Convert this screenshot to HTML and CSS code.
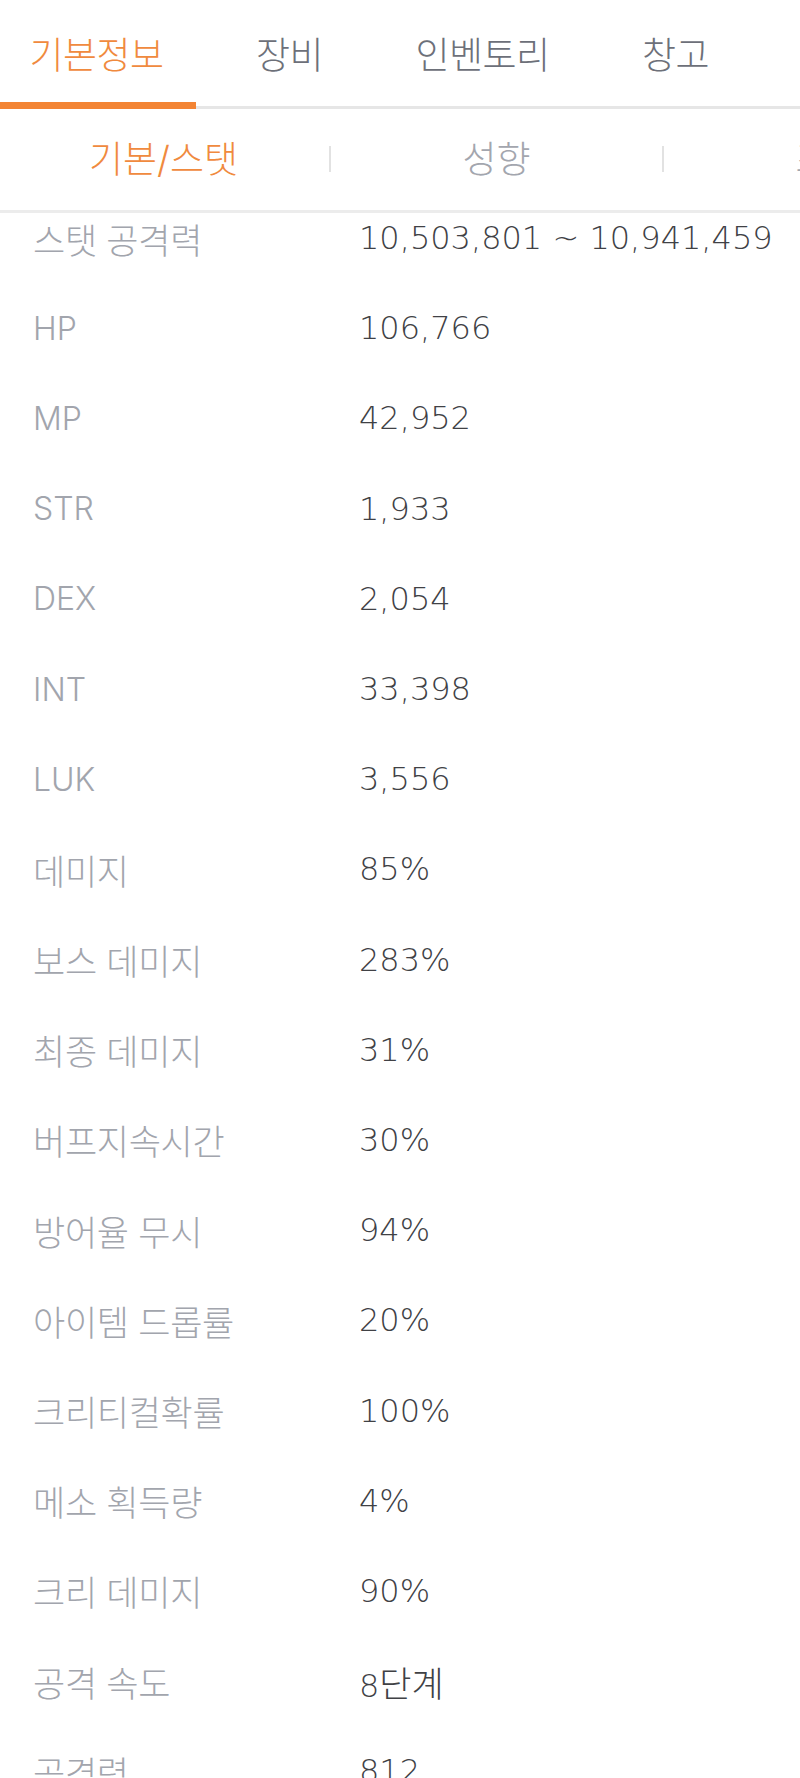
FILE: index.html
```html
<!DOCTYPE html>
<html lang="ko">
<head>
<meta charset="utf-8">
<title>기본정보</title>
<link rel="stylesheet" href="styles.css">
</head>
<body>
<div class="page">
  <nav class="tabs">
    <div class="tab active">기본정보</div>
    <div class="tab">장비</div>
    <div class="tab">인벤토리</div>
    <div class="tab">창고</div>
  </nav>
  <nav class="subtabs">
    <div class="subtab active">기본/스탯</div>
    <div class="subtab sep">성향</div>
    <div class="subtab sep">조합</div>
  </nav>
  <div class="list">
    <div class="list-inner">
      <div class="row"><span class="label">스탯 공격력</span><span class="value">10,503,801 ~ 10,941,459</span></div>
      <div class="row"><span class="label en">HP</span><span class="value">106,766</span></div>
      <div class="row"><span class="label en">MP</span><span class="value">42,952</span></div>
      <div class="row"><span class="label en">STR</span><span class="value">1,933</span></div>
      <div class="row"><span class="label en">DEX</span><span class="value">2,054</span></div>
      <div class="row"><span class="label en">INT</span><span class="value">33,398</span></div>
      <div class="row"><span class="label en">LUK</span><span class="value">3,556</span></div>
      <div class="row"><span class="label">데미지</span><span class="value">85%</span></div>
      <div class="row"><span class="label">보스 데미지</span><span class="value">283%</span></div>
      <div class="row"><span class="label">최종 데미지</span><span class="value">31%</span></div>
      <div class="row"><span class="label">버프지속시간</span><span class="value">30%</span></div>
      <div class="row"><span class="label">방어율 무시</span><span class="value">94%</span></div>
      <div class="row"><span class="label">아이템 드롭률</span><span class="value">20%</span></div>
      <div class="row"><span class="label">크리티컬확률</span><span class="value">100%</span></div>
      <div class="row"><span class="label">메소 획득량</span><span class="value">4%</span></div>
      <div class="row"><span class="label">크리 데미지</span><span class="value">90%</span></div>
      <div class="row"><span class="label">공격 속도</span><span class="value">8<span class="unit">단계</span></span></div>
      <div class="row"><span class="label">공격력</span><span class="value">812</span></div>
    </div>
  </div>
</div>
</body>
</html>
```

FILE: styles.css
```css
* { box-sizing: border-box; }
html, body {
  margin: 0;
  padding: 0;
  background: #ffffff;
}
body {
  width: 800px;
  height: 1778px;
  overflow: hidden;
  font-family: Inter, "Noto Sans CJK KR", sans-serif;
  font-weight: 300;
}
.page {
  width: 800px;
  height: 1778px;
  display: flex;
  flex-direction: column;
  overflow: hidden;
}
.tabs {
  display: grid;
  grid-template-columns: repeat(4, 193px);
  height: 109px;
  border-bottom: 3px solid #e6e6e6;
  flex: none;
}
.tab {
  position: relative;
  display: flex;
  align-items: center;
  justify-content: center;
  font-size: 37px;
  color: #6d7079;
  letter-spacing: -0.5px;
}
.tab.active {
  color: #f08a3e;
}
.tab.active::after {
  content: "";
  position: absolute;
  left: 0;
  right: -3px;
  bottom: -3px;
  height: 7px;
  background: #f38434;
}
.subtabs {
  display: grid;
  grid-template-columns: 333px 333px 333px;
  height: 104px;
  border-bottom: 3px solid #ececec;
  flex: none;
  overflow: hidden;
}
.subtab {
  display: flex;
  align-items: center;
  justify-content: center;
  padding-bottom: 6px;
  padding-right: 6px;
  font-size: 37px;
  color: #a3a6ae;
  position: relative;
  white-space: nowrap;
}
.subtab.active {
  color: #f08a3e;
}
.subtab.sep::before {
  content: "";
  position: absolute;
  left: -4px;
  top: 37px;
  width: 2px;
  height: 26px;
  background: #e2e2e2;
}
.list {
  flex: 1;
  overflow: hidden;
}
.list-inner {
  margin-top: -20px;
}
.row {
  display: flex;
  align-items: center;
  height: 90.2px;
}
.label {
  width: 359px;
  padding-left: 33px;
  color: #a2a5ad;
  flex: none;
  font-size: 35px;
  letter-spacing: -0.3px;
}
.label.en {
  font-size: 32px;
  letter-spacing: 0;
}
.value {
  color: #404145;
  font-family: "DejaVu Sans", "Noto Sans CJK KR", sans-serif;
  font-weight: 300;
  font-size: 32px;
}
.unit {
  font-family: "Noto Sans CJK KR", sans-serif;
  font-size: 35px;
}
```
